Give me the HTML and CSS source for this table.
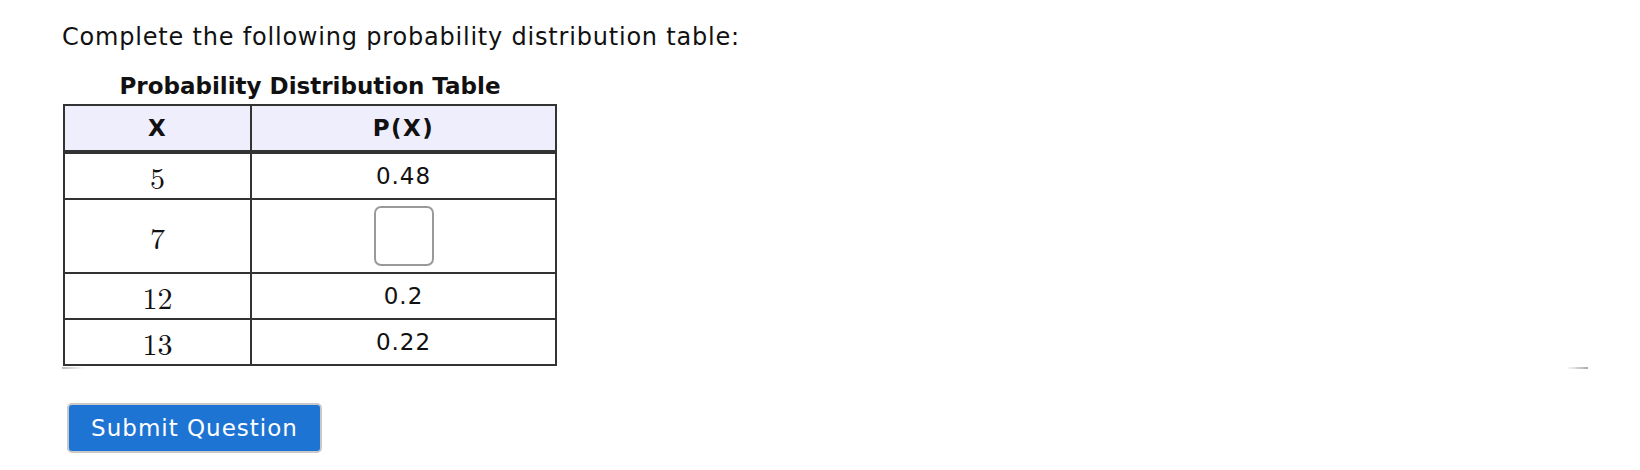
FILE: index.html
```html
<!DOCTYPE html>
<html>
<head>
<meta charset="utf-8">
<link rel="stylesheet" href="styles.css">
</head>
<body>
<div class="question">
  <p class="prompt">Complete the following probability distribution table:</p>
  <div class="table-wrap">
    <table class="dist">
      <caption>Probability Distribution Table</caption>
      <thead>
        <tr><th class="col-x">X</th><th class="col-p">P(X)</th></tr>
      </thead>
      <tbody>
        <tr><td class="num">5</td><td>0.48</td></tr>
        <tr class="tall"><td class="num">7</td><td><span class="answer"></span></td></tr>
        <tr><td class="num">12</td><td>0.2</td></tr>
        <tr><td class="num">13</td><td>0.22</td></tr>
      </tbody>
    </table>
    <div class="shadow-row"><span class="shadow shadow-left"></span><span class="shadow shadow-right"></span></div>
  </div>
  <button class="submit">Submit Question</button>
</div>
</body>
</html>
```
FILE: styles.css
```css
html, body {
  margin: 0;
  padding: 0;
  background: #fff;
}
body {
  font-family: "DejaVu Sans", sans-serif;
  color: #111;
}
.question {
  padding: 20px 0 0 62px;
}
.prompt {
  margin: 0;
  font-size: 24px;
  letter-spacing: 0.8px;
  line-height: 34px;
}
.table-wrap {
  margin-top: 15px;
}
.dist {
  border-collapse: collapse;
  width: 494px;
  margin-left: 1px;
}
.dist caption {
  font-weight: bold;
  font-size: 23px;
  line-height: 35px;
  padding: 0;
}
.dist th, .dist td {
  border: 2px solid #333;
  text-align: center;
  height: 44px;
  padding: 0;
  font-size: 23px;
  letter-spacing: 1px;
}
.dist th {
  background: #eeeefc;
  font-weight: bold;
  border-bottom-width: 4px;
  letter-spacing: 1.5px;
}
.col-x { width: 185px; }
.dist td.num {
  font-family: "Latin Modern Roman", "DejaVu Serif", serif;
  font-size: 30px;
  letter-spacing: 0;
}
.dist tr.tall td {
  height: 72px;
}
.answer {
  display: inline-block;
  width: 56px;
  height: 56px;
  border: 2px solid #9a9a9a;
  border-radius: 7px;
  vertical-align: middle;
}
.shadow-row {
  display: flex;
  justify-content: space-between;
  width: 1526px;
  height: 2px;
  margin-top: 1px;
}
.shadow {
  display: block;
  width: 22px;
  height: 2px;
}
.shadow-left {
  background: linear-gradient(to right, #bbb, #fff);
}
.shadow-right {
  background: linear-gradient(to right, #fff, #aaa);
}
.submit {
  display: block;
  margin: 34px 0 0 5px;
  width: 255px;
  height: 50px;
  background: #1e74d3;
  color: #fff;
  border: 2px solid #c9c9c9;
  border-radius: 5px;
  font-family: "DejaVu Sans", sans-serif;
  font-size: 23px;
  letter-spacing: 1px;
  padding: 0;
}
```
